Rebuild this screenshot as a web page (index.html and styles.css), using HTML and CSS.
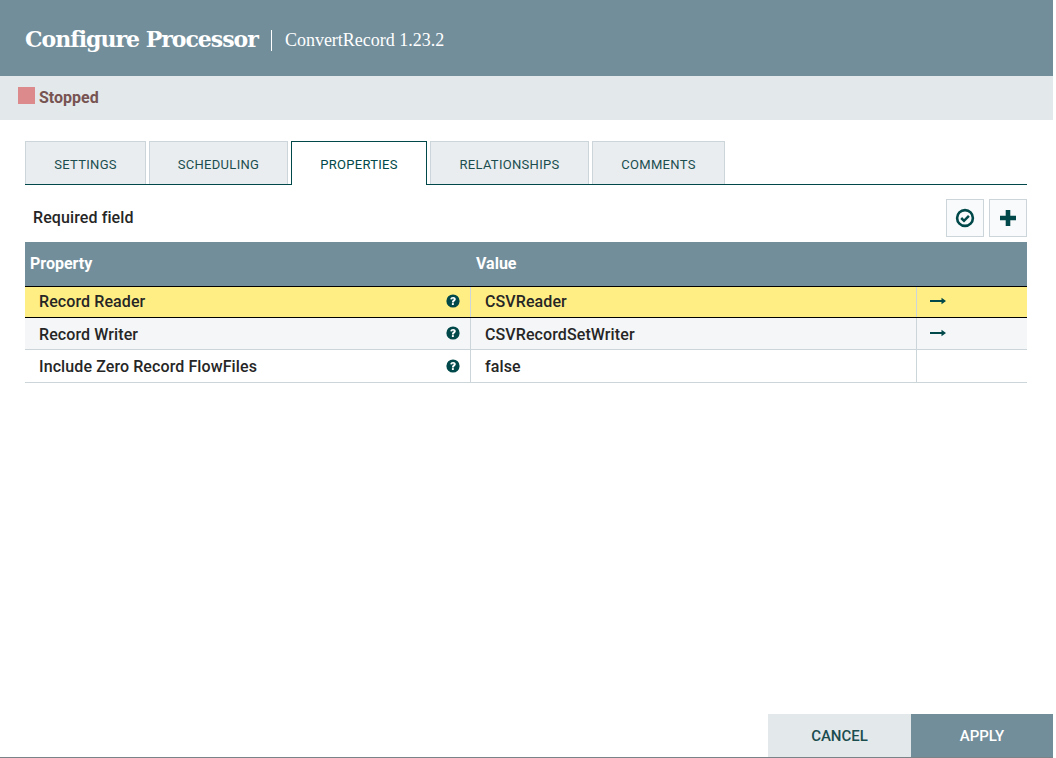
FILE: index.html
```html
<!DOCTYPE html>
<html lang="en">

<head>
    <meta charset="UTF-8">
    <meta name="viewport" content="width=device-width, initial-scale=1.0">
    <title>Configure Processor</title>
    <link rel="stylesheet" href="styles.css">
</head>

<body>
    <div class="dialog">
        <div class="header">
            <div class="title">Configure Processor</div>
            <div class="sub-title">ConvertRecord 1.23.2</div>
        </div>
        <div class="status-bar">
            <span class="status-icon"></span>
            <span class="status-text">Stopped</span>
        </div>

        <div class="content">
            <div class="tabs">
                <div class="tab tab-settings">SETTINGS</div>
                <div class="tab tab-scheduling">SCHEDULING</div>
                <div class="tab tab-properties active">PROPERTIES</div>
                <div class="tab tab-relationships">RELATIONSHIPS</div>
                <div class="tab tab-comments">COMMENTS</div>
            </div>

            <div class="toolbar">
                <div class="required">Required field</div>
                <div class="tool-buttons">
                    <div class="tool-button">
                        <svg width="20" height="20" viewBox="0 0 20 20">
                            <circle cx="10" cy="10" r="7.9" fill="none" stroke="#004849" stroke-width="2.6"/>
                            <path d="M6.2 10l2.800 2.800 4.900-5" fill="none" stroke="#004849" stroke-width="2.5"/>
                        </svg>
                    </div>
                    <div class="tool-button">
                        <svg width="20" height="20" viewBox="0 0 20 20">
                            <path d="M7.700 2h4.600v5.700H18v4.600h-5.700V18H7.700v-5.700H2V7.700h5.700z" fill="#004849"/>
                        </svg>
                    </div>
                </div>
            </div>

            <div class="grid">
                <div class="grid-header">
                    <div class="col-name">Property</div>
                    <div class="col-value">Value</div>
                </div>
                <div class="row row-selected">
                    <div class="cell cell-name">
                        <span class="name-text">Record Reader</span>
                        <svg class="help" width="14" height="14" viewBox="0 0 14 14">
                            <circle cx="7" cy="7" r="6.600" fill="#004849"/>
                            <path d="M4.300 5.300C4.400 3.700 5.600 2.900 7.100 2.900c1.500 0 2.700.9 2.700 2.300 0 1.900-2 1.800-2 3.200H5.900c0-2.300 1.800-2.300 1.800-3.200 0-.4-.3-.6-.7-.6-.5 0-.7.300-.8.900z" fill="#fff"/>
                            <rect x="5.900" y="9.100" width="1.900" height="1.900" fill="#fff"/>
                        </svg>
                    </div>
                    <div class="cell cell-value">CSVReader</div>
                    <div class="cell cell-action">
                        <svg class="arrow" width="18" height="8" viewBox="0 0 18 8">
                            <path d="M1 3h11.500V.8L17 4l-4.500 3.200V5H1z" fill="#004849"/>
                        </svg>
                    </div>
                </div>
                <div class="row row-alt">
                    <div class="cell cell-name">
                        <span class="name-text">Record Writer</span>
                        <svg class="help" width="14" height="14" viewBox="0 0 14 14">
                            <circle cx="7" cy="7" r="6.600" fill="#004849"/>
                            <path d="M4.300 5.300C4.400 3.700 5.600 2.900 7.100 2.900c1.500 0 2.700.9 2.700 2.300 0 1.900-2 1.800-2 3.200H5.900c0-2.300 1.800-2.300 1.800-3.200 0-.4-.3-.6-.7-.6-.5 0-.7.300-.8.900z" fill="#fff"/>
                            <rect x="5.900" y="9.100" width="1.900" height="1.900" fill="#fff"/>
                        </svg>
                    </div>
                    <div class="cell cell-value">CSVRecordSetWriter</div>
                    <div class="cell cell-action">
                        <svg class="arrow" width="18" height="8" viewBox="0 0 18 8">
                            <path d="M1 3h11.500V.8L17 4l-4.500 3.200V5H1z" fill="#004849"/>
                        </svg>
                    </div>
                </div>
                <div class="row">
                    <div class="cell cell-name">
                        <span class="name-text">Include Zero Record FlowFiles</span>
                        <svg class="help" width="14" height="14" viewBox="0 0 14 14">
                            <circle cx="7" cy="7" r="6.600" fill="#004849"/>
                            <path d="M4.300 5.300C4.400 3.700 5.600 2.900 7.100 2.900c1.500 0 2.700.9 2.700 2.300 0 1.900-2 1.800-2 3.200H5.900c0-2.300 1.800-2.300 1.800-3.200 0-.4-.3-.6-.7-.6-.5 0-.7.300-.8.900z" fill="#fff"/>
                            <rect x="5.900" y="9.100" width="1.900" height="1.900" fill="#fff"/>
                        </svg>
                    </div>
                    <div class="cell cell-value">false</div>
                    <div class="cell cell-action"></div>
                </div>
            </div>
        </div>

        <div class="footer">
            <div class="btn btn-cancel">CANCEL</div>
            <div class="btn btn-apply">APPLY</div>
        </div>
    </div>
</body>

</html>
```

FILE: styles.css
```css
html, body {
    margin: 0;
    padding: 0;
    height: 100%;
    background: #fff;
    overflow: hidden;
}

body {
    font-family: Roboto, sans-serif;
}

.dialog {
    width: 1053px;
    height: 758px;
    display: flex;
    flex-direction: column;
    box-sizing: border-box;
    border-bottom: 1px solid #7a8488;
}

.header {
    height: 76px;
    flex-shrink: 0;
    box-sizing: border-box;
    background: #728e9b;
    color: #fff;
    display: flex;
    align-items: center;
    padding: 5px 0 0 25px;
}

.title {
    font-family: "DejaVu Serif", serif;
    font-size: 22px;
    font-weight: 700;
    letter-spacing: -1px;
    padding: 0 13px 4px 0;
    line-height: 22px;
}

.sub-title {
    font-family: "Liberation Serif", serif;
    font-size: 18px;
    border-left: 1px solid #fff;
    padding-left: 13px;
    line-height: 21px;
}

.status-bar {
    height: 44px;
    flex-shrink: 0;
    background: #e3e8eb;
    display: flex;
    padding-left: 18px;
}

.status-icon {
    width: 17px;
    height: 17px;
    margin-top: 11px;
    background: #dd8a8d;
}

.status-text {
    margin: 14px 0 0 4px;
    font-size: 16px;
    line-height: 16px;
    font-weight: 700;
    color: #775351;
}

.content {
    flex: 1;
    padding: 21px 26px 0 25px;
}

.tabs {
    display: flex;
    height: 43px;
    border-bottom: 1px solid #004849;
}

.tab {
    height: 43px;
    box-sizing: border-box;
    margin-right: 3px;
    padding-top: 2px;
    background: #e9edf0;
    border: 1px solid #ccd5d9;
    border-bottom: 0;
    color: #1b4d4f;
    font-size: 13px;
    font-weight: 400;
    letter-spacing: 0.3px;
    display: flex;
    align-items: center;
    justify-content: center;
}

.tab-settings { width: 121px; }
.tab-scheduling { width: 139px; }
.tab-properties { width: 136px; }
.tab-relationships { width: 159px; }
.tab-comments { width: 133px; margin-right: 0; }

.tab.active {
    height: 44px;
    padding-bottom: 1px;
    background: #fff;
    border: 1px solid #004849;
    border-bottom: 0;
    color: #004849;
}

.toolbar {
    display: flex;
    justify-content: space-between;
    height: 57px;
}

.required {
    margin: 25px 0 0 8px;
    font-size: 16px;
    letter-spacing: 0.1px;
    line-height: 16px;
    font-weight: 500;
    color: #262626;
}

.tool-buttons {
    display: flex;
    gap: 5px;
    margin-top: 14px;
}

.tool-button {
    width: 38px;
    height: 38px;
    box-sizing: border-box;
    background: #f9fafb;
    border: 1px solid #ccd5d9;
    display: flex;
    align-items: center;
    justify-content: center;
}

.grid-header {
    height: 45px;
    background: #728e9b;
    color: #fff;
    font-size: 16px;
    line-height: 19px;
    font-weight: 700;
    display: flex;
    padding-top: 12px;
    box-sizing: border-box;
}

.col-name {
    width: 451px;
    padding-left: 5px;
    box-sizing: border-box;
}

.row {
    display: flex;
    height: 33px;
    box-sizing: border-box;
    border-bottom: 1px solid #ccd5d9;
    font-size: 16px;
    letter-spacing: 0.1px;
    font-weight: 500;
    color: #262626;
}

.row-selected {
    height: 32px;
    margin-top: -1px;
    background: #ffee83;
    border-top: 1px solid #000;
    border-bottom: 1px solid #000;
}

.row-selected .cell {
    padding-bottom: 2px;
}

.row-alt {
    background: #f4f6f7;
    height: 32px;
}

.row-alt .name-text,
.row-alt .cell-value {
    padding-top: 2px;
}

.row-alt .help,
.row-alt .arrow {
    margin-bottom: 2px;
}

.cell {
    display: flex;
    align-items: center;
    box-sizing: border-box;
}

.cell-name {
    width: 446px;
    padding: 0 10px 0 14px;
    justify-content: space-between;
    border-right: 1px solid #ccd5d9;
}

.cell-value {
    width: 446px;
    padding-left: 14px;
    border-right: 1px solid #ccd5d9;
}

.cell-action {
    padding-left: 12px;
}

.footer {
    height: 43px;
    flex-shrink: 0;
    display: flex;
    justify-content: flex-end;
}

.btn {
    height: 100%;
    display: flex;
    align-items: center;
    justify-content: center;
    font-size: 15px;
    font-weight: 500;
}

.btn-cancel {
    width: 143px;
    background: #e3e8eb;
    color: #1b4d4f;
}

.btn-apply {
    width: 142px;
    background: #728e9b;
    color: #fff;
}
```
